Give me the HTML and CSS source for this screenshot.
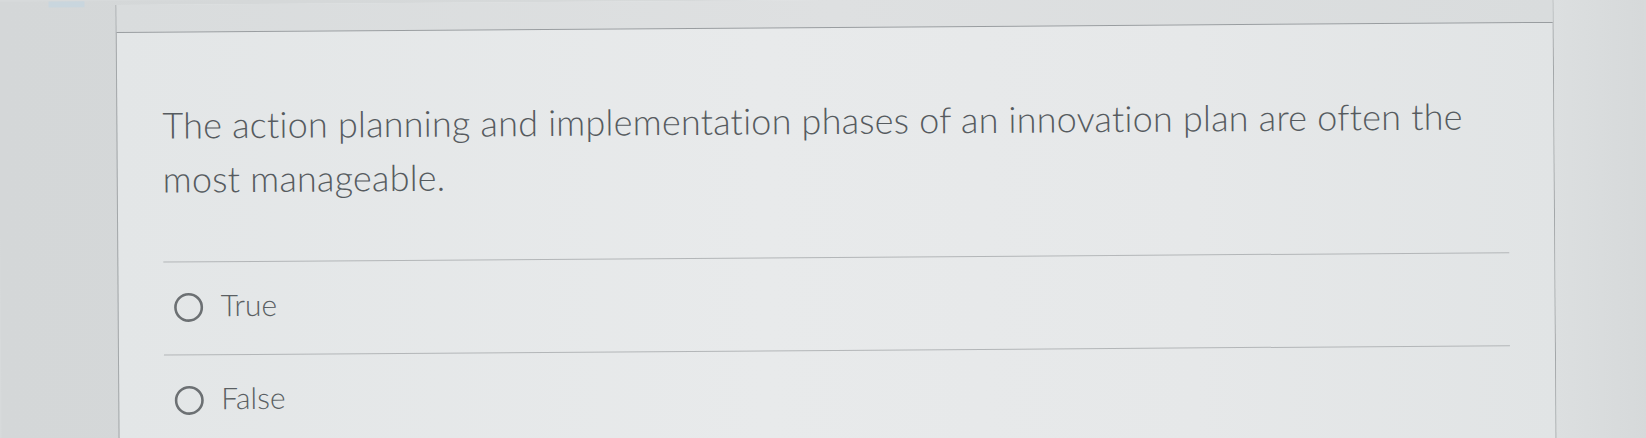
FILE: index.html
```html
<!DOCTYPE html>
<html lang="en">
<head>
<meta charset="utf-8">
<title>Question</title>
<link rel="stylesheet" href="styles.css">
</head>
<body>
<div class="page">
  <div class="gutter-left"><span class="tab"></span></div>
  <section class="card">
    <header class="card-header"></header>
    <div class="card-body">
      <p class="question">The action planning and implementation phases of an innovation plan are often the most manageable.</p>
      <ul class="options">
        <li class="option">
          <svg class="radio" width="30" height="30" viewBox="0 0 30 30"><circle cx="15" cy="15" r="13.2" fill="none" stroke="#6c7073" stroke-width="2.6"/></svg>
          <span class="label">True</span>
        </li>
        <li class="option">
          <svg class="radio" width="30" height="30" viewBox="0 0 30 30"><circle cx="15" cy="15" r="13.2" fill="none" stroke="#6c7073" stroke-width="2.6"/></svg>
          <span class="label">False</span>
        </li>
      </ul>
    </div>
  </section>
  <div class="gutter-right"></div>
</div>
</body>
</html>
```
FILE: styles.css
```css
html, body {
  margin: 0;
  padding: 0;
  overflow: hidden;
  background: #d7dadb;
}

.page {
  width: 1646px;
  height: 460px;
  display: flex;
  transform: rotate(-0.4deg);
  transform-origin: 823px 219px;
  margin-top: -4px;
  padding-top: 4px;
  box-sizing: border-box;
  background: linear-gradient(90deg, #d4d7d8 0%, #dadddd 100%);
}

.gutter-left {
  width: 117px;
  flex: none;
  position: relative;
}

.tab {
  position: absolute;
  left: 50px;
  top: -4px;
  width: 36px;
  height: 6px;
  background: #c9d6de;
}

.gutter-right {
  flex: 1;
  background: linear-gradient(90deg, #dcdfe0, #d6d9da);
}

.card {
  width: 1438px;
  flex: none;
  box-sizing: border-box;
  border-left: 1.5px solid #a3a7a9;
  border-right: 1.5px solid #a3a7a9;
  background: linear-gradient(90deg, #e3e6e7 0%, #e8eaeb 45%, #e6e8e9 75%, #e1e4e5 100%);
  display: flex;
  flex-direction: column;
}

.card-header {
  height: 27px;
  flex: none;
  border-bottom: 1.5px solid #999da0;
  background: linear-gradient(90deg, #d9dcdd 0%, #dee0e1 50%, #d9dcdd 100%);
}

.card-body {
  padding: 65px 45px 0 45px;
}

.question {
  margin: 0;
  font-family: Lato, "Liberation Sans", sans-serif;
  font-weight: 300;
  font-size: 36px;
  line-height: 54px;
  letter-spacing: 0.2px;
  color: #565b5f;
}

.options {
  list-style: none;
  margin: 56px 0 0 0;
  padding: 0;
}

.option {
  height: 93px;
  box-sizing: border-box;
  border-top: 1.5px solid #b3b6b8;
  display: flex;
  align-items: center;
  padding-left: 10px;
  padding-bottom: 9px;
}

.radio {
  flex: none;
  margin-top: 6px;
}

.label {
  margin-left: 17px;
  font-family: Lato, "Liberation Sans", sans-serif;
  font-weight: 300;
  font-size: 30px;
  color: #5a5f63;
}
```
